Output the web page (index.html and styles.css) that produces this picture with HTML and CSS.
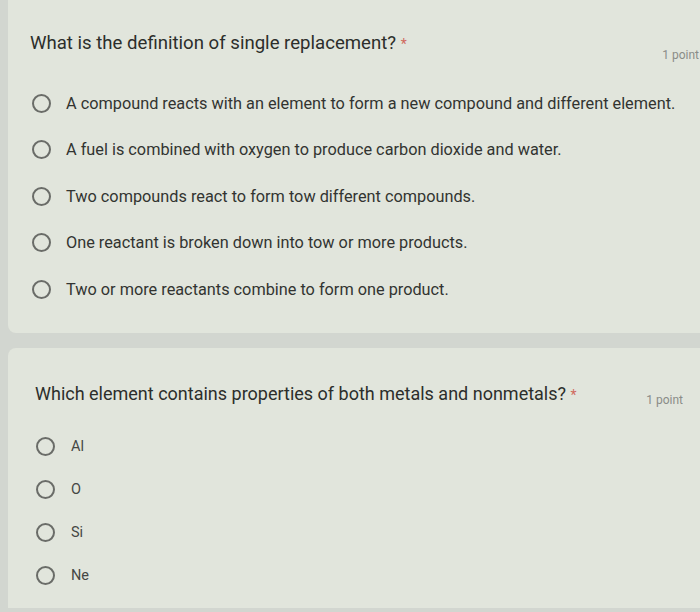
FILE: index.html
```html
<!DOCTYPE html>
<html>
<head>
<meta charset="utf-8">
<link rel="stylesheet" href="styles.css">
</head>
<body>
<div class="page">
  <section class="card card-first">
    <div class="head">
      <div class="question">What is the definition of single replacement? <span class="req">*</span></div>
      <div class="points">1 point</div>
    </div>
    <ul class="options">
      <li class="opt"><span class="radio"></span><span class="label">A compound reacts with an element to form a new compound and different element.</span></li>
      <li class="opt"><span class="radio"></span><span class="label">A fuel is combined with oxygen to produce carbon dioxide and water.</span></li>
      <li class="opt"><span class="radio"></span><span class="label">Two compounds react to form tow different compounds.</span></li>
      <li class="opt"><span class="radio"></span><span class="label">One reactant is broken down into tow or more products.</span></li>
      <li class="opt"><span class="radio"></span><span class="label">Two or more reactants combine to form one product.</span></li>
    </ul>
  </section>
  <section class="card card-second">
    <div class="head">
      <div class="question">Which element contains properties of both metals and nonmetals? <span class="req">*</span></div>
      <div class="points">1 point</div>
    </div>
    <ul class="options">
      <li class="opt"><span class="radio"></span><span class="label">Al</span></li>
      <li class="opt"><span class="radio"></span><span class="label">O</span></li>
      <li class="opt"><span class="radio"></span><span class="label">Si</span></li>
      <li class="opt"><span class="radio"></span><span class="label">Ne</span></li>
    </ul>
  </section>
</div>
</body>
</html>
```

FILE: styles.css
```css
html, body {
  margin: 0;
  padding: 0;
  background: #d2d6d0;
}
body {
  width: 700px;
  height: 612px;
  overflow: hidden;
  font-family: Roboto, "Liberation Sans", Arial, sans-serif;
  color: #333532;
}
.page {
  display: flex;
  flex-direction: column;
  gap: 15px;
  padding-left: 8px;
}
.card {
  background: #e1e5dc;
  box-sizing: border-box;
}
.card-first {
  height: 333px;
  padding: 31px 0 0 22px;
  border-bottom-left-radius: 8px;
}
.card-second {
  height: 260px;
  padding: 34px 0 0 27px;
  border-top-left-radius: 8px;
}
.head {
  display: flex;
  align-items: flex-end;
  justify-content: space-between;
}
.question {
  font-size: 18.6px;
  line-height: 24px;
  color: #2c2e2b;
}
.card-second .question {
  font-size: 18px;
}
.req {
  color: #d06a5e;
  font-size: 14px;
}
.points {
  font-size: 12px;
  color: #8a8c88;
}
.card-first .points {
  margin-right: 1px;
  margin-bottom: -6px;
}
.card-second .points {
  margin-right: 17px;
  margin-bottom: 0;
}
.options {
  list-style: none;
  margin: 0;
  padding: 0;
  display: flex;
  flex-direction: column;
}
.card-first .options {
  margin-top: 37px;
  gap: 26.5px;
}
.card-second .options {
  margin-top: 29px;
  gap: 23px;
}
.opt {
  display: flex;
  align-items: center;
  height: 20px;
}
.radio {
  width: 15px;
  height: 15px;
  border: 2.5px solid #6a6c68;
  border-radius: 50%;
  flex: none;
}
.card-first .radio {
  margin-left: 2px;
  margin-right: 15px;
}
.card-second .radio {
  margin-left: 1px;
  margin-right: 16px;
}
.card-first .label {
  font-size: 16.3px;
  color: #323431;
}
.card-second .label {
  font-size: 14.5px;
  color: #454744;
}
```
